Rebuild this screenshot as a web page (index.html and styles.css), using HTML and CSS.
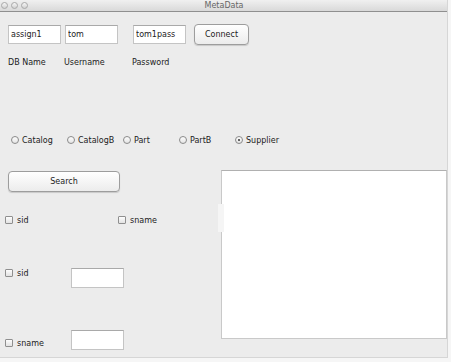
FILE: index.html
```html
<!DOCTYPE html>
<html lang="en">
<head>
  <meta charset="UTF-8">
  <title>MetaData</title>
  <link rel="stylesheet" href="styles.css">
</head>
<body>

<div class="window">
  <!-- Title bar -->
  <div class="titlebar">
    <div class="lights">
      <span class="light"></span>
      <span class="light"></span>
      <span class="light"></span>
    </div>
    <div class="title">MetaData</div>
  </div>

  <!-- Connection fields -->
  <div class="conn-row">
    <input type="text" class="field" value="assign1">
    <input type="text" class="field" value="tom">
    <input type="text" class="field field-pass" value="tom1pass">
    <button class="btn btn-connect">Connect</button>
  </div>

  <div class="labels-row">
    <span class="lbl lbl-db">DB Name</span>
    <span class="lbl lbl-user">Username</span>
    <span class="lbl">Password</span>
  </div>

  <!-- Table choice -->
  <div class="radio-row">
    <label class="radio r1"><span class="dot"></span>Catalog</label>
    <label class="radio r2"><span class="dot"></span>CatalogB</label>
    <label class="radio r3"><span class="dot"></span>Part</label>
    <label class="radio r4"><span class="dot"></span>PartB</label>
    <label class="radio r5"><span class="dot checked"></span>Supplier</label>
  </div>

  <div class="main">
    <div class="left">
      <button class="btn btn-search">Search</button>

      <div class="check-row row1">
        <label class="check c-sid"><span class="box"></span>sid</label>
        <label class="check"><span class="box"></span>sname</label>
      </div>

      <div class="check-row row2">
        <label class="check c-sid"><span class="box"></span>sid</label>
        <input type="text" class="field small">
      </div>

      <div class="check-row row3">
        <label class="check c-sid"><span class="box"></span>sname</label>
        <input type="text" class="field small">
      </div>
    </div>

    <div class="output">
      <span class="tab"></span>
      <textarea class="results"></textarea>
    </div>
  </div>
</div>

</body>
</html>
```

FILE: styles.css
```css
body {
  margin: 0;
  padding: 0;
  background-color: #f6f6f6;
  font-family: "DejaVu Sans", Arial, sans-serif;
  font-size: 8px;
  color: #222;
}

.window {
  width: 447px;
  height: 357px;
  background-color: #ececec;
  border-right: 1px solid #d6d6d6;
  border-bottom: 1px solid #d6d6d6;
  overflow: hidden;
}

.titlebar {
  height: 11px;
  display: flex;
  align-items: center;
  background: linear-gradient(#f0f0f0, #d9d9d9);
  border-bottom: 1px solid #8f8f8f;
}

.lights {
  display: flex;
  gap: 3px;
  margin-left: 1px;
  width: 120px;
}

.light {
  width: 7px;
  height: 7px;
  border-radius: 50%;
  border: 1px solid #a8a8a8;
  background: linear-gradient(#f6f6f6, #d2d2d2);
  box-sizing: border-box;
}

.title {
  flex: 1;
  text-align: center;
  margin-right: 120px;
  color: #666;
  font-size: 8px;
  line-height: 11px;
}

.conn-row {
  display: flex;
  align-items: center;
  margin: 12px 0 0 8px;
  height: 21px;
}

.field {
  width: 53px;
  height: 19px;
  box-sizing: border-box;
  border: 1px solid #c4c4c4;
  border-top-color: #a9a9a9;
  background: #fff;
  padding: 0 2px;
  font-family: inherit;
  font-size: 8px;
  color: #222;
  margin: 0 4px 0 0;
}

.field-pass {
  margin-left: 11px;
}

.btn {
  font-family: inherit;
  font-size: 8px;
  color: #222;
  background: linear-gradient(#ffffff, #ececec);
  border: 1px solid #9d9d9d;
  border-radius: 4px;
  box-shadow: 0 1px 1px rgba(0, 0, 0, 0.15);
  padding: 0;
}

.btn-connect {
  width: 55px;
  height: 21px;
  margin-left: 4px;
}

.labels-row {
  display: flex;
  margin: 12px 0 0 8px;
  height: 12px;
  line-height: 12px;
}

.lbl-db {
  width: 56px;
}

.lbl-user {
  width: 68px;
}

.radio-row {
  display: flex;
  align-items: center;
  margin: 65px 0 0 11px;
  height: 12px;
}

.radio {
  display: flex;
  align-items: center;
  gap: 3px;
}

.r1, .r2, .r3, .r4 {
  width: 56px;
}

.dot {
  width: 8px;
  height: 8px;
  border-radius: 50%;
  border: 1px solid #8a8a8a;
  background: linear-gradient(#fdfdfd, #e4e4e4);
  box-sizing: border-box;
  position: relative;
}

.dot.checked::after {
  content: "";
  position: absolute;
  left: 2px;
  top: 2px;
  width: 2px;
  height: 2px;
  border-radius: 50%;
  background: #333;
}

.main {
  display: flex;
  margin-top: 24px;
}

.left {
  width: 213px;
}

.btn-search {
  width: 112px;
  height: 21px;
  margin: 1px 0 0 8px;
  display: block;
}

.check-row {
  display: flex;
  margin-left: 5px;
}

.row1 {
  margin-top: 22px;
  height: 12px;
  align-items: center;
}

.row2 {
  margin-top: 42px;
  height: 20px;
  align-items: flex-start;
}

.row2 .check {
  margin-top: -1px;
}

.row3 {
  margin-top: 42px;
  height: 20px;
  align-items: flex-end;
}

.row3 .check {
  margin-bottom: 1px;
}

.check {
  display: flex;
  align-items: center;
  gap: 4px;
  height: 12px;
}

.c-sid {
  width: 66px;
}

.row1 .c-sid {
  width: 113px;
}

.box {
  width: 8px;
  height: 8px;
  border: 1px solid #8f8f8f;
  border-radius: 1px;
  background: linear-gradient(#fdfdfd, #e2e2e2);
  box-sizing: border-box;
}

.field.small {
  width: 53px;
  height: 20px;
}

.output {
  position: relative;
  margin-left: 8px;
}

.tab {
  position: absolute;
  left: -3px;
  top: 34px;
  width: 6px;
  height: 28px;
  background: #f5f5f5;
}

.results {
  display: block;
  width: 226px;
  height: 169px;
  box-sizing: border-box;
  border: 1px solid #c9c9c9;
  border-top-color: #b0b0b0;
  background: #fff;
  resize: none;
  margin: 0;
}
```
